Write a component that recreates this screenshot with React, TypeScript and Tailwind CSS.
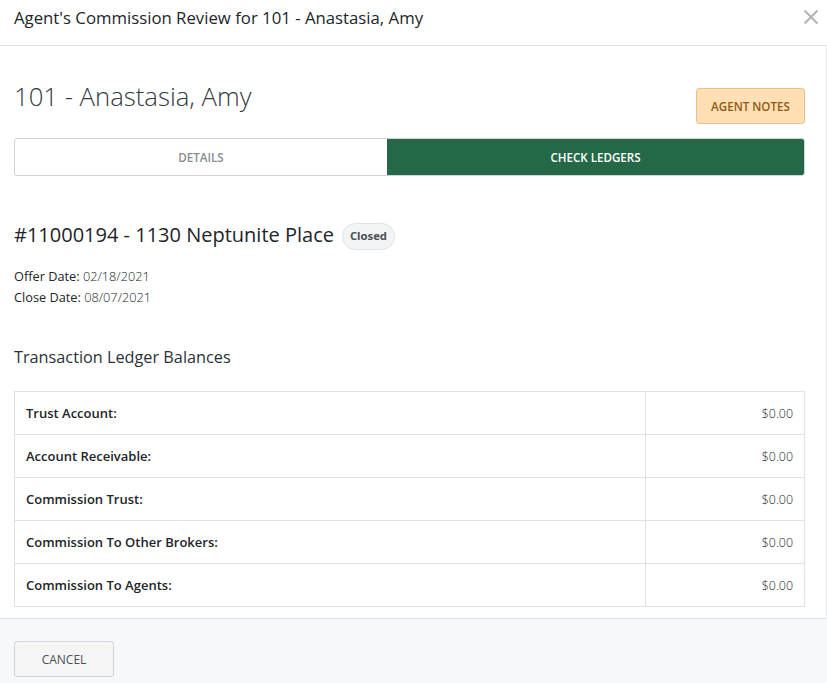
import React from "react"

const rows = [
  "Trust Account:",
  "Account Receivable:",
  "Commission Trust:",
  "Commission To Other Brokers:",
  "Commission To Agents:"
]

export default function App() {
  return (
    <div className="h-[683px] w-[827px] overflow-hidden bg-white font-['Open_Sans',sans-serif] text-[#212529] flex flex-col">
      <div className="h-[46px] shrink-0 border-b border-[#dee2e6] flex items-start justify-between pl-[14px] pr-[8px]">
        <h5 className="mt-[6px] text-[16.75px] leading-6">Agent's Commission Review for 101 - Anastasia, Amy</h5>
        <svg className="mt-[9px]" width="16" height="16" viewBox="0 0 16 16" fill="none" stroke="#b3b3b3" strokeWidth="2">
          <path d="M1.5 1.5l13 13M14.5 1.5l-13 13" />
        </svg>
      </div>

      <div className="h-[572px] shrink-0 border-r border-[#eeeeee] pl-[14px] pr-[21px] flex flex-col">
        <div className="mt-[42px] h-[50px] flex items-start justify-between">
          <h2 className="mt-[-11px] text-[25.7px] leading-10 font-light text-[#333a42]">101 - Anastasia, Amy</h2>
          <button className="h-[36px] w-[109px] pt-[1px] rounded-[3px] border border-[#e8c08c] bg-[#ffdfb3] text-[11.6px] font-semibold text-[#8f5a12]">
            AGENT NOTES
          </button>
        </div>

        <div className="h-[38px] flex rounded-[3px] border border-[#ced4da] overflow-hidden text-[11.6px] font-semibold">
          <div className="w-[372px] pt-[1px] flex items-center justify-center text-[#868e96]">DETAILS</div>
          <div className="flex-1 pt-[1px] flex items-center justify-center bg-[#256848] text-white">CHECK LEDGERS</div>
        </div>

        <div className="mt-[47px] h-[27px] flex items-start gap-[8px]">
          <h4 className="text-[20px] leading-6">#11000194 - 1130 Neptunite Place</h4>
          <span className="h-[27px] w-[53px] justify-center rounded-full border border-[#dee2e6] bg-[#f3f4f6] text-[11.3px] font-bold text-[#495057] flex items-center">
            Closed
          </span>
        </div>

        <div className="mt-[16px] text-[12.75px] leading-[21px]">
          <div>Offer Date: <span className="font-light">02/18/2021</span></div>
          <div>Close Date: <span className="font-light">08/07/2021</span></div>
        </div>

        <h5 className="mt-[37px] text-[16.25px] leading-6 text-[#2b3138]">Transaction Ledger Balances</h5>

        <div className="mt-[22px] border border-[#dee2e6] border-b-0">
          {rows.map(label => (
            <div key={label} className="h-[43px] flex border-b border-[#dee2e6] text-[13px]">
              <div className="w-[631px] pt-[2px] pl-[11px] pr-[10px] flex items-center font-semibold border-r border-[#dee2e6]">{label}</div>
              <div className="flex-1 pt-[2px] pl-[10px] pr-[11px] flex items-center justify-end text-[12.4px] font-light text-[#212529]">$0.00</div>
            </div>
          ))}
        </div>
      </div>

      <div className="flex-1 border-t border-[#dee2e6] bg-[#f7f8fa] pl-[14px] pt-[22px]">
        <button className="h-[36px] w-[100px] pt-[2px] rounded-[3px] border border-[#ced4da] bg-[#f5f5f5] text-[12px] text-[#495057]">
          CANCEL
        </button>
      </div>
    </div>
  )
}
